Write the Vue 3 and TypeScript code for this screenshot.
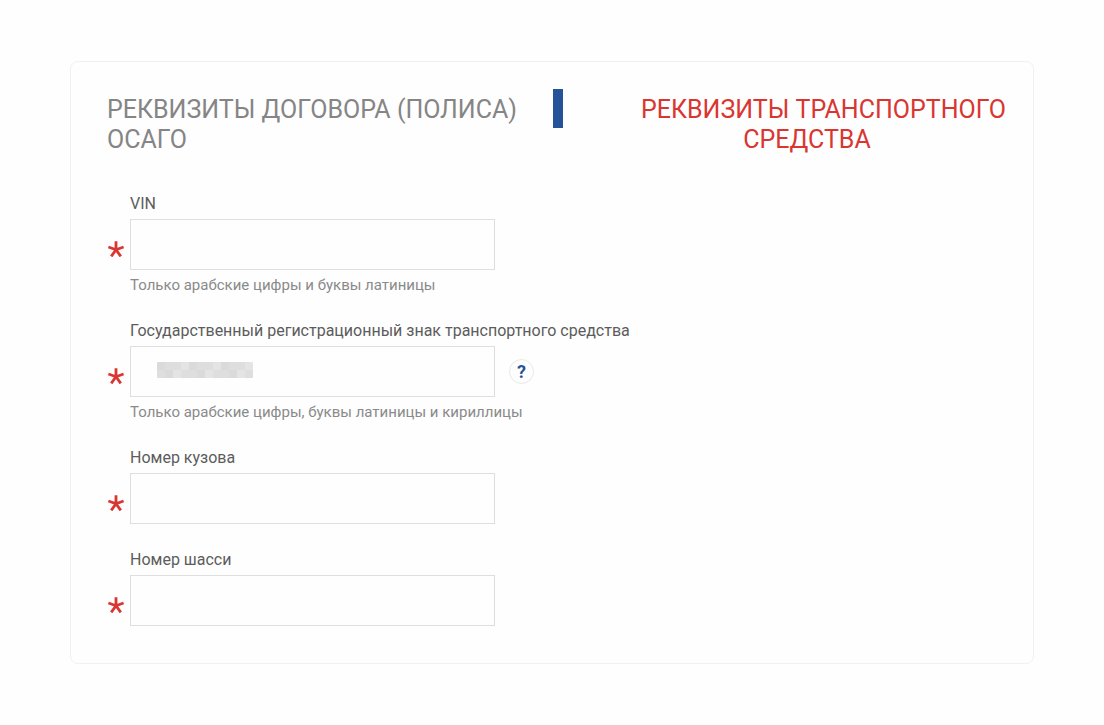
<script setup lang="ts">
interface Field {
  id: string
  label: string
  hint?: string
  masked?: boolean
  help?: boolean
}

const fields: Field[] = [
  { id: 'vin', label: 'VIN', hint: 'Только арабские цифры и буквы латиницы' },
  {
    id: 'plate',
    label: 'Государственный регистрационный знак транспортного средства',
    hint: 'Только арабские цифры, буквы латиницы и кириллицы',
    masked: true,
    help: true,
  },
  { id: 'body', label: 'Номер кузова' },
  { id: 'chassis', label: 'Номер шасси' },
]

const pattern = ['011201120112', '102110211021']
const shades = ['#dadada', '#dedede', '#e4e4e4']
const tiles = pattern.flatMap((line, row) =>
  [...line].map((c, col) => ({ x: col * 8, y: row * 8, fill: shades[Number(c)] })),
)
</script>

<template>
  <main class="card">
    <header class="tabs">
      <h2 class="tab">РЕКВИЗИТЫ ДОГОВОРА (ПОЛИСА) ОСАГО</h2>
      <span class="divider"></span>
      <h2 class="tab current">РЕКВИЗИТЫ&nbsp;ТРАНСПОРТНОГО СРЕДСТВА</h2>
    </header>
    <form class="fields" @submit.prevent>
      <div v-for="f in fields" :key="f.id" class="field">
        <label :for="f.id">{{ f.label }}</label>
        <div class="row">
          <svg class="star" width="16" height="16" viewBox="0 0 16 16" aria-hidden="true">
            <path d="M8 8.8V0.3M8 8.8L0.4 6M8 8.8L15.6 6M8 8.8L3.2 15.4M8 8.8L12.8 15.4" />
          </svg>
          <div class="box">
            <input :id="f.id" type="text" />
            <svg v-if="f.masked" class="mask" width="96" height="16" viewBox="0 0 96 16" aria-hidden="true">
              <rect v-for="(t, i) in tiles" :key="i" :x="t.x" :y="t.y" width="8" height="8" :fill="t.fill" />
            </svg>
          </div>
          <button v-if="f.help" class="help" type="button">?</button>
        </div>
        <p v-if="f.hint" class="hint">{{ f.hint }}</p>
      </div>
    </form>
  </main>
</template>

<style>
body {
  background: #fefefe;
}
</style>

<style scoped>
.card {
  box-sizing: border-box;
  margin: 61px 70px;
  padding: 27px 60px 37px 36px;
  border: 1px solid #f1f1f1;
  border-radius: 8px;
  background: #fefefe;
  font-family: Roboto, "Liberation Sans", sans-serif;
}
.tabs {
  display: flex;
  align-items: flex-start;
}
.tab {
  flex: 1;
  margin: 0;
  padding-top: 6px;
  font-size: 25px;
  line-height: 30px;
  font-weight: 400;
  color: #858585;
}
.current {
  flex: 0 0 332px;
  min-width: 0;
  color: #d93632;
  text-align: center;
}
.divider {
  flex: none;
  width: 10px;
  height: 39px;
  margin: 0 78px 0 32px;
  background: #255298;
}
.fields {
  display: flex;
  flex-direction: column;
  gap: 26px;
  margin-top: 39px;
  padding-left: 23px;
}
label {
  display: block;
  font-size: 16px;
  line-height: 20px;
  margin-bottom: 5px;
  color: #5c5c5c;
}
.row {
  display: flex;
  align-items: center;
  margin-left: -23px;
}
.star {
  margin: 8px 6px 0 1px;
  fill: none;
  stroke: #d93632;
  stroke-width: 2.8;
}
.box {
  position: relative;
  width: 365px;
}
input {
  display: block;
  box-sizing: border-box;
  width: 100%;
  height: 51px;
  padding: 0 26px;
  border: 1px solid #dedede;
  border-radius: 0;
  background: #fefefe;
  font: 16px Roboto, "Liberation Sans", sans-serif;
  outline: none;
}
.mask {
  position: absolute;
  left: 27px;
  top: 16px;
  border-radius: 1px;
}
.help {
  width: 25px;
  height: 25px;
  margin-left: 14px;
  padding: 0;
  border: 1px solid #e8e8e8;
  border-radius: 50%;
  background: #fefefe;
  color: #255298;
  font: 700 18px/23px Roboto, "Liberation Sans", sans-serif;
}
.hint {
  margin: 6px 0 0;
  font-size: 15px;
  line-height: 19px;
  color: #8a8a8a;
}
</style>
